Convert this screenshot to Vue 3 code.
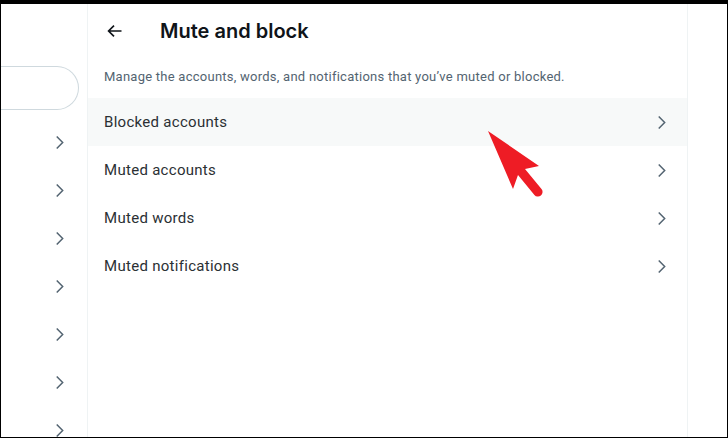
<script setup>
const sideRows = [0, 1, 2, 3, 4, 5, 6]
const rows = [
  { label: 'Blocked accounts', active: true },
  { label: 'Muted accounts', active: false },
  { label: 'Muted words', active: false },
  { label: 'Muted notifications', active: false },
]
</script>

<template>
  <div class="frame">
    <aside class="side">
      <div class="search"></div>
      <div class="side-list">
        <div v-for="r in sideRows" :key="r" class="side-row">
          <svg class="chev" viewBox="0 0 24 24"><path d="M8.5 4.5 16 12l-7.5 7.5" /></svg>
        </div>
      </div>
    </aside>
    <main class="main">
      <header class="head">
        <svg class="back" viewBox="0 0 24 24"><path d="M21 12H6M12 5.5 5.5 12l6.5 6.5" /></svg>
        <h1 class="title">Mute and block</h1>
      </header>
      <p class="desc">Manage the accounts, words, and notifications that you’ve muted or blocked.</p>
      <div v-for="row in rows" :key="row.label" class="row" :class="{ active: row.active }">
        <span class="label">{{ row.label }}</span>
        <svg class="chev" viewBox="0 0 24 24"><path d="M8.5 4.5 16 12l-7.5 7.5" /></svg>
      </div>
    </main>
    <div class="rest"></div>
    <svg class="pointer" viewBox="0 0 60 70">
      <path d="M2 3 53 38 39 41 55.5 61A4.6 4.6 0 0 1 48.4 66.9L32 47 27 61Z" />
    </svg>
  </div>
</template>

<style scoped>
.frame {
  position: relative;
  box-sizing: border-box;
  width: 728px;
  height: 438px;
  display: flex;
  overflow: hidden;
  background: #fff;
  border: solid #000;
  border-width: 4px 1px 1px 1px;
  font-family: Inter, "Liberation Sans", sans-serif;
  color: #0f1419;
}
.side {
  box-sizing: border-box;
  width: 87px;
  flex: none;
  border-right: 1px solid #eff3f4;
}
.search {
  box-sizing: border-box;
  height: 44px;
  width: 78px;
  margin-top: 62px;
  border: 1px solid #cfd9de;
  border-left: none;
  border-radius: 0 22px 22px 0;
}
.side-list {
  margin-top: 8px;
}
.side-row {
  height: 48px;
  display: flex;
  align-items: center;
  justify-content: flex-end;
  padding-right: 18px;
}
.chev {
  width: 19px;
  height: 19px;
  flex: none;
  fill: none;
  stroke: #536471;
  stroke-width: 1.9;
}
.main {
  box-sizing: border-box;
  width: 600px;
  flex: none;
  border-right: 1px solid #eff3f4;
}
.head {
  height: 53px;
  display: flex;
  align-items: center;
  padding-left: 16px;
}
.back {
  width: 20px;
  height: 20px;
  flex: none;
  fill: none;
  stroke: #0f1419;
  stroke-width: 2;
}
.title {
  margin: 0 0 0 36px;
  font-size: 20px;
  line-height: 24px;
  font-weight: 600;
}
.desc {
  margin: 0;
  height: 41px;
  padding: 12px 16px 0;
  box-sizing: border-box;
  font-family: Roboto, Inter, sans-serif;
  font-size: 13px;
  line-height: 16px;
  letter-spacing: 0.25px;
  color: #536471;
}
.row {
  height: 48px;
  display: flex;
  align-items: center;
  justify-content: space-between;
  padding: 0 16px;
  font-family: Roboto, Inter, sans-serif;
  font-size: 15px;
}
.row.active {
  background: #f7f9f9;
}
.label {
  color: #2b3034;
  letter-spacing: 0.29px;
}
.rest {
  flex: 1;
}
.pointer {
  position: absolute;
  left: 485px;
  top: 124px;
  width: 60px;
  height: 70px;
  fill: #ee1c25;
}
</style>
